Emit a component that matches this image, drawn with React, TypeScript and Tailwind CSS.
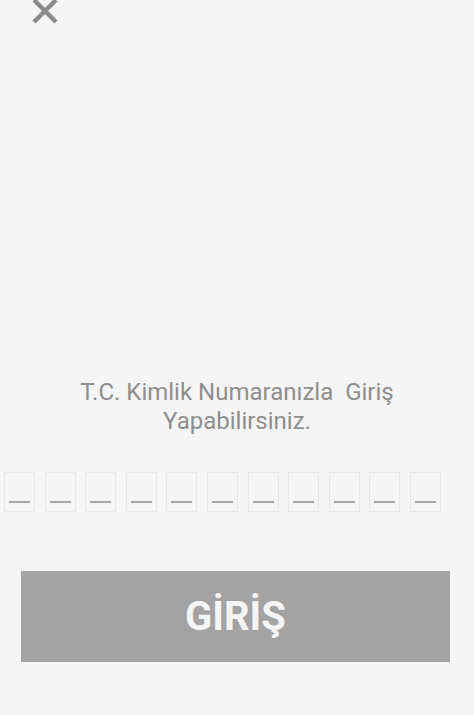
import React from "react";

export default function App() {
  const boxes = Array.from({ length: 11 });
  return (
    <div className="h-[715px] w-full bg-[#f5f5f5] flex flex-col overflow-hidden" style={{ fontFamily: "Roboto, 'Liberation Sans', sans-serif" }}>
      <svg width="30" height="30" viewBox="0 0 30 30" className="ml-[30px] mt-[-4px] shrink-0">
        <path d="M4 4 L26 26 M26 4 L4 26" stroke="#8a8a8a" strokeWidth="4.5" strokeLinecap="butt" fill="none" />
      </svg>
      <div className="mt-[352px] text-center text-[24px] leading-[29px] text-[#8e8e8e] px-2">
        <p className="whitespace-pre">T.C. Kimlik Numaranızla  Giriş</p>
        <p>Yapabilirsiniz.</p>
      </div>
      <div className="mt-[36px] flex gap-[9.6px] pl-[4px]">
        {boxes.map((_, i) => (
          <div key={i} className="w-[31px] h-[40px] border border-[#e8e8e8] bg-[#f5f5f5] flex items-end justify-center pb-[8px]">
            <div className="w-[21px] h-[2px] bg-[#a6a6a6]" />
          </div>
        ))}
      </div>
      <button className="mt-[59px] ml-[21px] w-[429px] h-[91px] bg-[#a4a3a4] text-[#f5f5f5] font-bold text-[40px] flex items-center justify-center">
        GİRİŞ
      </button>
    </div>
  );
}
